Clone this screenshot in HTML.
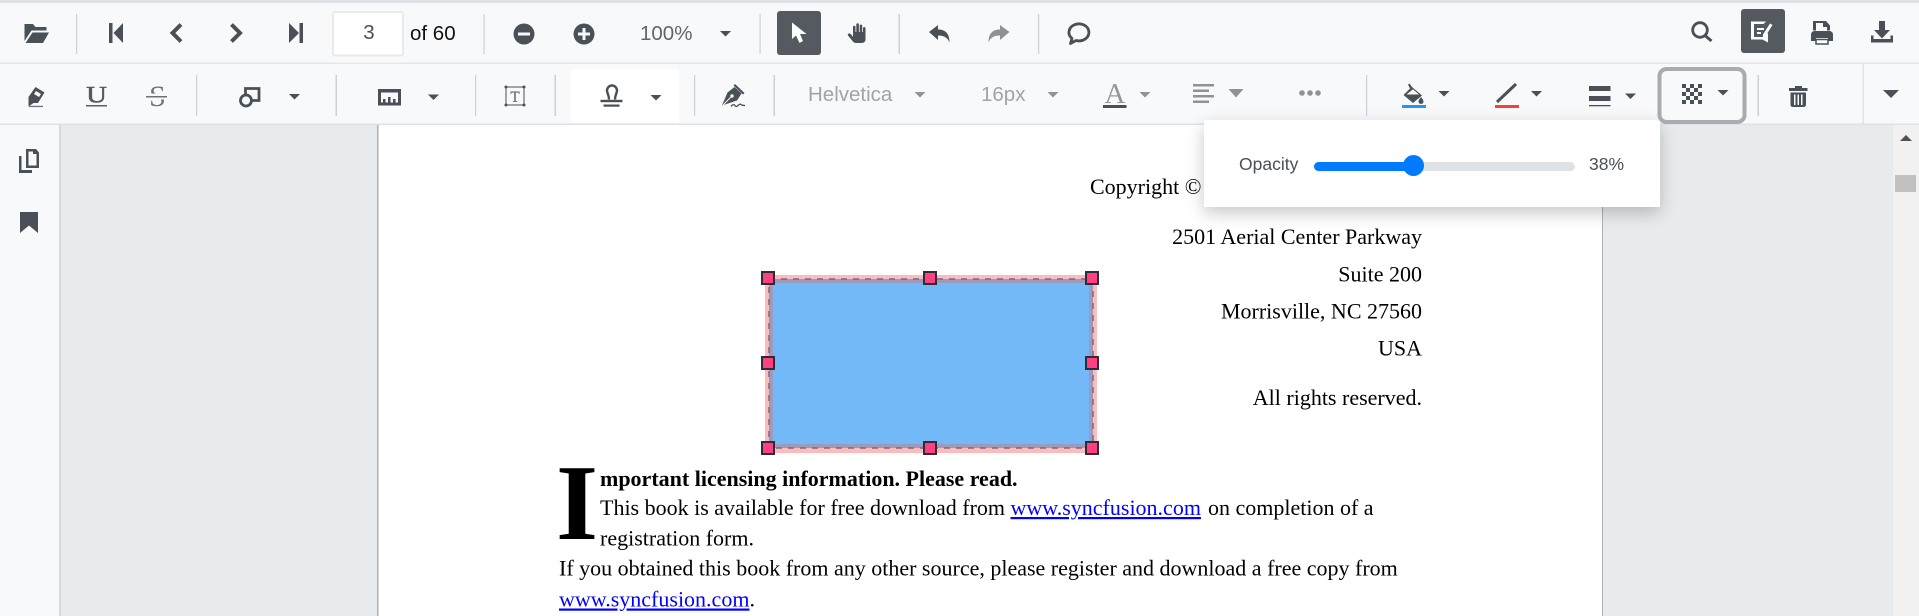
<!DOCTYPE html>
<html><head><meta charset="utf-8"><style>
html,body{margin:0;padding:0;width:1919px;height:616px;overflow:hidden;background:#fff}
svg{position:absolute;left:0;top:0}
.s{font-family:"Liberation Sans",sans-serif}
.t{font-family:"Liberation Serif",serif;font-size:22px;fill:#000}
#pop{position:absolute;left:1204px;top:120px;width:456px;height:87px;background:#fff;box-shadow:0 6px 16px rgba(0,0,0,.22)}
#pop span{position:absolute;font-family:"Liberation Sans",sans-serif;font-size:17.5px;color:#495057;line-height:20px}
#pop i{position:absolute;display:block}
</style></head><body>
<svg width="1919" height="616" viewBox="0 0 1919 616">
<rect width="1919" height="616" fill="#fff"/>
<rect x="0" y="125" width="59" height="491" fill="#f8f9fa"/>
<rect x="59" y="125" width="2" height="491" fill="#d5d8dc"/>
<rect x="61" y="125" width="316" height="491" fill="#e8ebee"/>
<rect x="377" y="125" width="1.5" height="491" fill="#aeb2b7"/>
<rect x="1602" y="125" width="1" height="491" fill="#aeb2b7"/>
<rect x="1603" y="125" width="290" height="491" fill="#e8ebee"/>
<rect x="1893" y="125" width="26" height="491" fill="#f1f1f1"/>
<path d="M1900 141 L1912 141 L1906 135Z" fill="#505050"/>
<rect x="1895" y="175" width="21" height="17" fill="#c1c1c1"/>
<rect x="0" y="0" width="1919" height="125" fill="#f8f9fa"/>
<rect x="0" y="0" width="1919" height="3" fill="#dee2e6"/>
<rect x="0" y="62.5" width="1919" height="1.5" fill="#e4e6e9"/>
<rect x="0" y="123.5" width="1919" height="1.5" fill="#dee2e6"/>
<g fill="#ccd1d6">
<rect x="76" y="14" width="1.2" height="40"/><rect x="483.5" y="14" width="1.2" height="40"/><rect x="759.5" y="14" width="1.2" height="40"/><rect x="898.5" y="14" width="1.5" height="40"/><rect x="1038" y="14" width="1.2" height="40"/>
<rect x="196" y="75" width="1.2" height="41"/><rect x="335.5" y="75" width="1.5" height="41"/><rect x="475" y="75" width="1.2" height="41"/><rect x="554.5" y="75" width="1.5" height="41"/><rect x="694" y="75" width="1.2" height="41"/><rect x="773.5" y="75" width="1.5" height="41"/><rect x="1366" y="75" width="1.2" height="41"/><rect x="1757.5" y="75" width="1.5" height="41"/><rect x="1862.5" y="64" width="1.5" height="60" fill="#e1e4e7"/>
</g>
<rect x="333" y="12" width="70" height="43.5" rx="2" fill="#fff" stroke="#e9eaec" stroke-width="2"/>
<text x="369" y="39" class="s" font-size="20.5" fill="#495057" text-anchor="middle">3</text>
<text x="410" y="40" class="s" font-size="20.5" fill="#111">of 60</text>
<text x="640" y="40" class="s" font-size="20.5" fill="#5f666d">100%</text>
<rect x="777" y="11" width="44" height="44" rx="3" fill="#555a61"/>
<rect x="1741" y="9" width="44" height="44" rx="3" fill="#555a61"/>
<rect x="571" y="69" width="108" height="54" rx="2" fill="#fff"/>
<g fill="#495057">
<path d="M24.5 24H33L35.5 27H46.5V30.5H31.5L24.5 41Z"/><path d="M32.5 32.5H49L43 43H25.500Z"/>
<path d="M109 23h3.500v20H109Z"/><path d="M123 23V43L113.500 33Z"/>
<path d="M181 24.500L172.500 33L181 41.500" fill="none" stroke="#495057" stroke-width="4"/>
<path d="M231.500 24.500L240 33L231.500 41.500" fill="none" stroke="#495057" stroke-width="4"/>
<path d="M289 23V43L299 33Z"/><path d="M299.500 23H303V43H299.500Z"/>
<circle cx="524" cy="34" r="10.500"/><rect x="518" y="32.500" width="12" height="3" fill="#f8f9fa"/>
<circle cx="584" cy="34" r="10.500"/><path d="M578 32.500h4.500V28h3v4.500H590v3h-4.500V40h-3v-4.500H578Z" fill="#f8f9fa"/>
<path d="M720 31h11l-5.500 5.500Z"/>
<path d="M792 22.500V39L796 35.500L799.500 43L803 41L800 34H806.500Z" fill="#fff"/>
<path d="M853 37V27a1.200 1.200 0 012.500 0V32h.8V24.500a1.300 1.300 0 012.600 0V32h.8V25.500a1.300 1.300 0 012.500 0V32h.8V28a1.300 1.300 0 012.500 0V39q0 4-4 4H856q-2 0-3.500-2l-4.500-5.500q-.7-1.500 .8-2 1.200-.3 2.200 .7Z"/>
<path d="M929 32L938 25V29.500C945 29.500 949.500 33 949.500 42.500C947.500 37.500 944 35.500 938 35.500V40Z"/>
<path d="M1009.500 32L1000 25V29.500C993 29.500 988.500 33 988.500 42.500C990.500 37.500 994 35.500 1000 35.500V40Z" fill="#8e9297"/>
<path d="M1070.500 43.500L1072 38.500A10 8.500 0 1 1 1076 40.500Z" fill="none" stroke="#495057" stroke-width="2.800" stroke-linejoin="round"/>
<circle cx="1700" cy="30" r="7.300" fill="none" stroke="#495057" stroke-width="2.800"/><path d="M1705 35.500L1711.500 41" stroke="#495057" stroke-width="3" fill="none"/>
<path d="M1813 21h13l4 4.500v5h-3v-3.500h-4v-4h-7v7.500h-3Z"/><path d="M1811 35q0-4 4-4h14q4 0 4 4v6h-5v-3h-12v3h-5Z"/><path d="M1816 39.500h12V44h-12Z" fill="#fff" stroke="#495057" stroke-width="1.500"/>
<path d="M1879 21h6v9h5l-8 8.500-8-8.500h5Z"/><path d="M1871 35.500h2.500v3.500h17v-3.500h2.500V42.500h-22Z"/>
<path d="M1751 21.500H1766L1763.500 24H1754V37H1762.500L1768 33V42.500L1762.500 39.500H1751Z" fill="#fff"/>
<path d="M1757 28h7v2h-7Zm0 4h4v2h-4Z" fill="#fff"/><path d="M1763 34.500L1770 23.500L1772.500 25L1765.500 36L1763 37Z" fill="#fff"/>
<path d="M35.500 87L44.500 92.500L38 103H33.500L28.500 106.500V97Z"/><path d="M36 91L41 94L39 97L34 94Z" fill="#f8f9fa"/><rect x="29" y="105.800" width="14" height="1.300" fill="#6c7278"/>
<text transform="translate(96.500 102.500) scale(1.25 1)" font-family="Liberation Serif,serif" font-size="23" fill="#555a61" stroke="#555a61" stroke-width=".5" text-anchor="middle">U</text><rect x="86" y="105" width="21" height="1.500" fill="#5b6066"/>
<text x="157.500" y="106" font-family="Liberation Serif,serif" font-size="30" fill="#6c7278" text-anchor="middle">S</text><rect x="146" y="93.500" width="23" height="6" fill="#f8f9fa"/><rect x="146" y="96" width="21" height="1.500" fill="#6c7278"/>
<path d="M245.500 95V88.500H259V100.500H250" fill="none" stroke="#495057" stroke-width="2.800"/><circle cx="246" cy="100.500" r="5.500" fill="#f8f9fa" stroke="#495057" stroke-width="2.800"/>
<path d="M289 94h11l-5.500 5.500Z"/>
<path d="M378 89H401V105.500H378Z M381 92.500V102.500H398V92.500Z" fill-rule="evenodd"/><path d="M383 99h2.500v4H383Zm5-2h2.500v6H388Zm5 2h2.500v4H393Z"/>
<path d="M428 94.500h11l-5.500 5.500Z"/>
<rect x="506" y="87" width="18" height="18" fill="none" stroke="#495057" stroke-width="1"/><g><circle cx="506" cy="87" r="1.500"/><circle cx="524" cy="87" r="1.500"/><circle cx="506" cy="105" r="1.500"/><circle cx="524" cy="105" r="1.500"/></g>
<path d="M510.500 91.500h9v2.500h-.8v-1.500h-3v8.500h1.500v.8h-4.400v-.8h1.500v-8.500h-3V94h-.8Z" fill="#555a61"/>
<path d="M609 99.500C609 94.500 607 93.500 607 90.500a5 5 0 0 1 10 0C617 93.500 615 94.500 615 99.500" fill="none" stroke="#495057" stroke-width="2.400"/><rect x="600.500" y="99.800" width="22" height="2.400"/><rect x="603.500" y="104.500" width="16" height="2.200"/>
<path d="M650.500 95h11l-5.500 5.500Z"/>
<path d="M735 84L744.500 93L743 94.500L733.500 85.500Z"/><path d="M734.500 87L741.500 93.500L737 100.500L722 105.500L727.500 92.500Z"/><path d="M723 105L731 97" stroke="#f8f9fa" stroke-width="1" fill="none"/><circle cx="732" cy="96" r="1.700" fill="#f8f9fa"/><path d="M731 106.500q2-3 4-1 1 2 3 0t3-1 4 1" fill="none" stroke="#495057" stroke-width="1.300"/>
</g>
<g fill="#a0a4a9" class="s">
<text x="808" y="101" font-size="20.5">Helvetica</text>
<text x="981" y="101" font-size="20.5">16px</text>
</g>
<g fill="#8f9398">
<path d="M914.500 92h11l-5.500 5.500Z"/><path d="M1047.500 92h11l-5.500 5.500Z"/><path d="M1139.500 92h11l-5.500 5.500Z"/>
<path d="M1228.500 89H1243.500L1236 97.500Z"/>
<rect x="1193" y="84" width="21" height="2.500"/><rect x="1193" y="89.500" width="16" height="2.500"/><rect x="1193" y="95" width="21" height="2.500"/><rect x="1193" y="100.500" width="16" height="2.500"/>
<circle cx="1302" cy="93" r="2.800"/><circle cx="1310" cy="93" r="2.800"/><circle cx="1318" cy="93" r="2.800"/>
</g>
<text x="1115" y="103" font-family="Liberation Serif,serif" font-size="29" fill="#94989d" text-anchor="middle">A</text>
<rect x="1103" y="105" width="23.500" height="3" fill="#495057"/>
<g fill="#495057">
<path d="M1408 84.500L1409.500 83.500L1412 87L1422 95.500L1413 103L1403.500 95L1410 88.500Z"/><path d="M1406.500 94.500H1419L1413 89.300Z" fill="#f8f9fa"/>
<path d="M1421 97q2.500 3 2.500 4.500a2.500 2.500 0 0 1-5 0q0-1.500 2.500-4.500Z"/>
<rect x="1402" y="105" width="24" height="3" fill="#2196f3"/>
<path d="M1438.500 91h11l-5.500 5.500Z"/>
<path d="M1497 102L1516 84" stroke="#495057" stroke-width="3" fill="none"/>
<rect x="1495" y="105" width="24" height="3" fill="#f44336"/>
<path d="M1531 91h11l-5.500 5.500Z"/>
<rect x="1589" y="86" width="21.500" height="5"/><rect x="1589" y="96" width="21.500" height="5"/><rect x="1589" y="105" width="21.500" height="1.300"/>
<path d="M1625 93.500h11l-5.500 5.500Z"/>
<path d="M1682 84h4v4h-4Zm8 0h4v4h-4Zm8 0h4v4h-4ZM1686 88h4v4h-4Zm8 0h4v4h-4ZM1682 92h4v4h-4Zm8 0h4v4h-4Zm8 0h4v4h-4ZM1686 96h4v4h-4Zm8 0h4v4h-4ZM1682 100h4v4h-4Zm8 0h4v4h-4Zm8 0h4v4h-4Z"/>
<path d="M1717.500 90h11l-5.500 5.500Z"/>
<path d="M1795 86H1802V88H1807.500V91H1789V88H1795Z"/><path d="M1790.500 92.500H1806V104.500Q1806 107 1803.500 107H1793Q1790.500 107 1790.500 104.500Z"/>
<path d="M1794 94.500h1.500V105H1794Zm3.500 0h1.500V105h-1.500Zm3.500 0h1.500V105H1801Z" fill="#f8f9fa"/>
<path d="M1883 90H1899L1891 98Z"/>
<path d="M26 149H36L39 152.500V168H26Z M28.500 151.500V165.500H36.500V154H33V151.500Z" fill-rule="evenodd"/>
<path d="M19 156H21.500V170H32V173H19Z"/>
<path d="M20 212H38V233L29 225.500L20 233Z"/>
</g>
<text x="1090" y="194" class="t">Copyright ©</text>
<text x="1422" y="244" class="t" text-anchor="end">2501 Aerial Center Parkway</text>
<text x="1422" y="281.500" class="t" text-anchor="end">Suite 200</text>
<text x="1422" y="318.500" class="t" text-anchor="end">Morrisville, NC 27560</text>
<text x="1422" y="355.500" class="t" text-anchor="end">USA</text>
<text x="1422" y="405" class="t" text-anchor="end">All rights reserved.</text>
<text x="556" y="539" font-family="Liberation Serif,serif" font-weight="700" font-size="108" fill="#000">I</text>
<text x="600" y="486" class="t" font-weight="700">mportant licensing information. Please read.</text>
<text x="600" y="515" class="t">This book is available for free download from</text>
<text x="1010.500" y="515" class="t" style="fill:#00f;text-decoration:underline">www.syncfusion.com</text>
<text x="1208" y="515" class="t">on completion of a</text>
<text x="600" y="545.500" class="t">registration form.</text>
<text x="559" y="575.500" class="t">If you obtained this book from any other source, please register and download a free copy from</text>
<text x="559" y="606.500" class="t"><tspan style="fill:#00f;text-decoration:underline">www.syncfusion.com</tspan>.</text>
<rect x="765" y="275" width="332" height="178" fill="#fdbcbc"/>
<rect x="769" y="279" width="324" height="169" fill="#9d9abd"/>
<rect x="773" y="283" width="316" height="161" fill="#74b9f7"/>
<rect x="769" y="279" width="324" height="169" fill="none" stroke="#7b6b80" stroke-width="1.500" stroke-dasharray="6 6"/>
<g fill="#ff4081" stroke="#2d2d3a" stroke-width="2">
<rect x="762" y="272" width="12" height="12"/><rect x="924" y="272" width="12" height="12"/><rect x="1086" y="272" width="12" height="12"/>
<rect x="762" y="357" width="12" height="12"/><rect x="1086" y="357" width="12" height="12"/>
<rect x="762" y="442" width="12" height="12"/><rect x="924" y="442" width="12" height="12"/><rect x="1086" y="442" width="12" height="12"/>
</g>
</svg>
<div id="pop">
<span style="left:35px;top:34px">Opacity</span>
<i style="left:110px;top:42px;width:261px;height:9px;border-radius:5px;background:#dee2e6"></i>
<i style="left:110px;top:42px;width:100px;height:9px;border-radius:5px 0 0 5px;background:#007bff"></i>
<i style="left:199px;top:35px;width:21px;height:21px;border-radius:50%;background:#007bff"></i>
<span style="left:385px;top:34px">38%</span>
</div>
<svg width="1919" height="126" viewBox="0 0 1919 126" style="pointer-events:none">
<rect x="1659.5" y="69" width="85" height="53" rx="7" fill="none" stroke="#a9abaf" stroke-width="4"/>
</svg>
</body></html>
